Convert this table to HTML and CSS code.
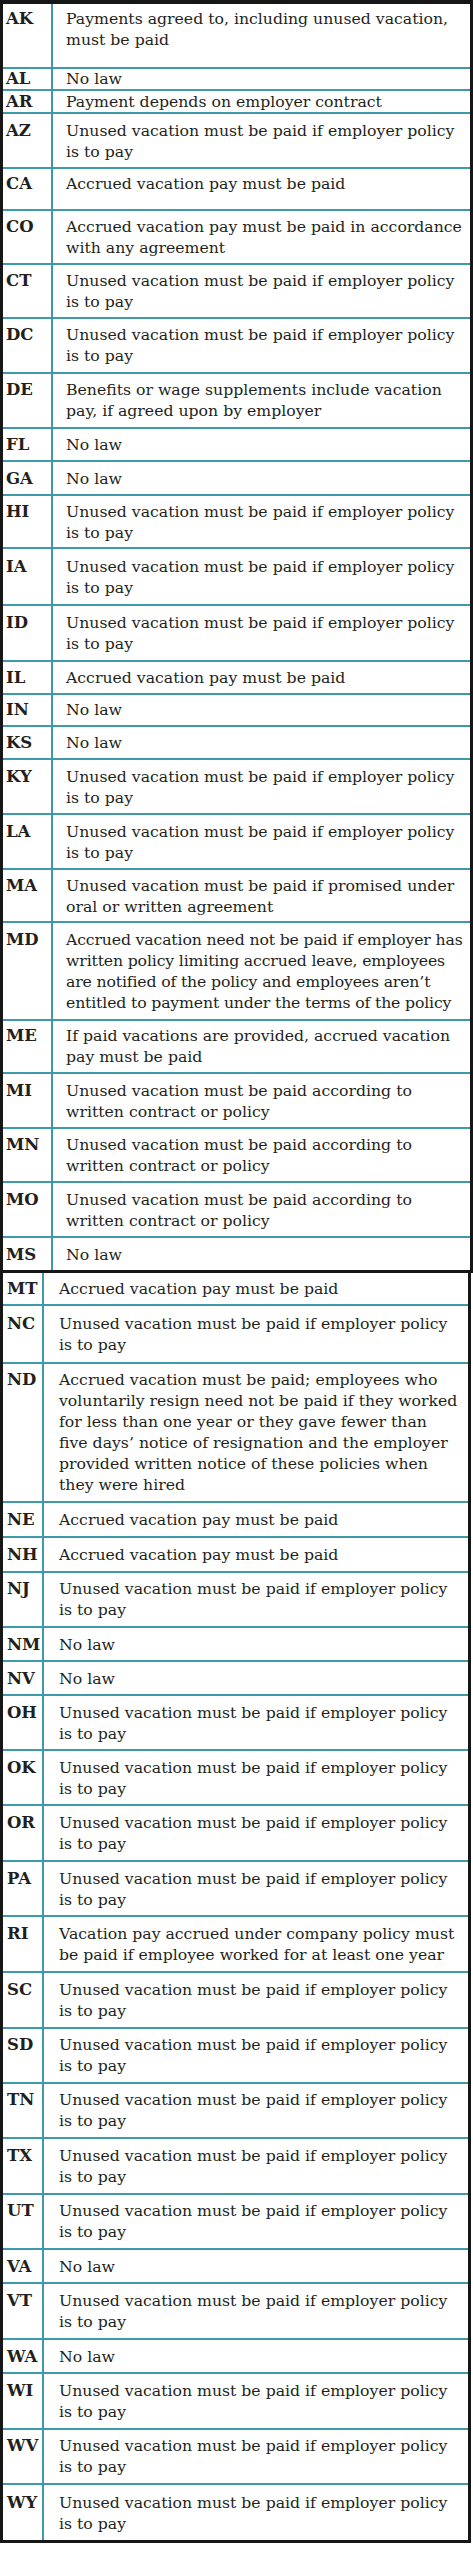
FILE: index.html
```html
<!DOCTYPE html>
<html lang="en">
<head>
<meta charset="utf-8">
<title>State vacation pay laws</title>
<link rel="stylesheet" href="styles.css">
</head>
<body>
<div class="sheet">
  <div class="part part-top">
    <div class="row row-top"><div class="code">AK</div><div class="desc">Payments agreed to, including unused vacation,<br>must be paid</div></div>
    <div class="row"><div class="code">AL</div><div class="desc">No law</div></div>
    <div class="row"><div class="code">AR</div><div class="desc">Payment depends on employer contract</div></div>
    <div class="row"><div class="code">AZ</div><div class="desc">Unused vacation must be paid if employer policy<br>is to pay</div></div>
    <div class="row row-top"><div class="code">CA</div><div class="desc">Accrued vacation pay must be paid</div></div>
    <div class="row"><div class="code">CO</div><div class="desc">Accrued vacation pay must be paid in accordance<br>with any agreement</div></div>
    <div class="row"><div class="code">CT</div><div class="desc">Unused vacation must be paid if employer policy<br>is to pay</div></div>
    <div class="row"><div class="code">DC</div><div class="desc">Unused vacation must be paid if employer policy<br>is to pay</div></div>
    <div class="row"><div class="code">DE</div><div class="desc">Benefits or wage supplements include vacation<br>pay, if agreed upon by employer</div></div>
    <div class="row"><div class="code">FL</div><div class="desc">No law</div></div>
    <div class="row"><div class="code">GA</div><div class="desc">No law</div></div>
    <div class="row"><div class="code">HI</div><div class="desc">Unused vacation must be paid if employer policy<br>is to pay</div></div>
    <div class="row"><div class="code">IA</div><div class="desc">Unused vacation must be paid if employer policy<br>is to pay</div></div>
    <div class="row"><div class="code">ID</div><div class="desc">Unused vacation must be paid if employer policy<br>is to pay</div></div>
    <div class="row"><div class="code">IL</div><div class="desc">Accrued vacation pay must be paid</div></div>
    <div class="row"><div class="code">IN</div><div class="desc">No law</div></div>
    <div class="row"><div class="code">KS</div><div class="desc">No law</div></div>
    <div class="row"><div class="code">KY</div><div class="desc">Unused vacation must be paid if employer policy<br>is to pay</div></div>
    <div class="row"><div class="code">LA</div><div class="desc">Unused vacation must be paid if employer policy<br>is to pay</div></div>
    <div class="row"><div class="code">MA</div><div class="desc">Unused vacation must be paid if promised under<br>oral or written agreement</div></div>
    <div class="row"><div class="code">MD</div><div class="desc desc-tight">Accrued vacation need not be paid if employer has<br>written policy limiting accrued leave, employees<br>are notified of the policy and employees aren’t<br>entitled to payment under the terms of the policy</div></div>
    <div class="row"><div class="code">ME</div><div class="desc">If paid vacations are provided, accrued vacation<br>pay must be paid</div></div>
    <div class="row"><div class="code">MI</div><div class="desc">Unused vacation must be paid according to<br>written contract or policy</div></div>
    <div class="row"><div class="code">MN</div><div class="desc">Unused vacation must be paid according to<br>written contract or policy</div></div>
    <div class="row"><div class="code">MO</div><div class="desc">Unused vacation must be paid according to<br>written contract or policy</div></div>
    <div class="row"><div class="code">MS</div><div class="desc">No law</div></div>
  </div>
  <div class="part part-bottom">
    <div class="row"><div class="code">MT</div><div class="desc">Accrued vacation pay must be paid</div></div>
    <div class="row"><div class="code">NC</div><div class="desc">Unused vacation must be paid if employer policy<br>is to pay</div></div>
    <div class="row"><div class="code">ND</div><div class="desc">Accrued vacation must be paid; employees who<br>voluntarily resign need not be paid if they worked<br>for less than one year or they gave fewer than<br>five days’ notice of resignation and the employer<br>provided written notice of these policies when<br>they were hired</div></div>
    <div class="row"><div class="code">NE</div><div class="desc">Accrued vacation pay must be paid</div></div>
    <div class="row"><div class="code">NH</div><div class="desc">Accrued vacation pay must be paid</div></div>
    <div class="row"><div class="code">NJ</div><div class="desc">Unused vacation must be paid if employer policy<br>is to pay</div></div>
    <div class="row"><div class="code">NM</div><div class="desc">No law</div></div>
    <div class="row"><div class="code">NV</div><div class="desc">No law</div></div>
    <div class="row"><div class="code">OH</div><div class="desc">Unused vacation must be paid if employer policy<br>is to pay</div></div>
    <div class="row"><div class="code">OK</div><div class="desc">Unused vacation must be paid if employer policy<br>is to pay</div></div>
    <div class="row"><div class="code">OR</div><div class="desc">Unused vacation must be paid if employer policy<br>is to pay</div></div>
    <div class="row"><div class="code">PA</div><div class="desc">Unused vacation must be paid if employer policy<br>is to pay</div></div>
    <div class="row"><div class="code">RI</div><div class="desc">Vacation pay accrued under company policy must<br>be paid if employee worked for at least one year</div></div>
    <div class="row"><div class="code">SC</div><div class="desc">Unused vacation must be paid if employer policy<br>is to pay</div></div>
    <div class="row"><div class="code">SD</div><div class="desc">Unused vacation must be paid if employer policy<br>is to pay</div></div>
    <div class="row"><div class="code">TN</div><div class="desc">Unused vacation must be paid if employer policy<br>is to pay</div></div>
    <div class="row"><div class="code">TX</div><div class="desc">Unused vacation must be paid if employer policy<br>is to pay</div></div>
    <div class="row"><div class="code">UT</div><div class="desc">Unused vacation must be paid if employer policy<br>is to pay</div></div>
    <div class="row"><div class="code">VA</div><div class="desc">No law</div></div>
    <div class="row"><div class="code">VT</div><div class="desc">Unused vacation must be paid if employer policy<br>is to pay</div></div>
    <div class="row"><div class="code">WA</div><div class="desc">No law</div></div>
    <div class="row"><div class="code">WI</div><div class="desc">Unused vacation must be paid if employer policy<br>is to pay</div></div>
    <div class="row"><div class="code">WV</div><div class="desc">Unused vacation must be paid if employer policy<br>is to pay</div></div>
    <div class="row"><div class="code">WY</div><div class="desc">Unused vacation must be paid if employer policy<br>is to pay</div></div>
  </div>
</div>
</body>
</html>
```

FILE: styles.css
```css
html, body {
  margin: 0;
  padding: 0;
  background: #ffffff;
}

.sheet {
  width: 473px;
  font-family: "DejaVu Serif", "Liberation Serif", serif;
  color: #231f20;
}

.part {
  display: grid;
  box-sizing: border-box;
  border-left: 3px solid #161616;
  border-right: 3px solid #161616;
}

.part-top {
  width: 473px;
  border-top: 4px solid #161616;
  border-bottom: 3px solid #161616;
  grid-template-rows: 64.5px 22.5px 23px 55px 41.5px 54px 54px 55.5px 54.5px 33.5px 34px 53px 57px 56px 32.5px 32.5px 33px 55px 55px 53px 97.5px 53.5px 55px 54px 55px 32px;
}

.part-bottom {
  width: 471px;
  border-bottom: 3px solid #161616;
  grid-template-rows: 33px 57.5px 139.5px 35px 34.5px 55.5px 34px 34px 55px 55px 56px 55px 56px 55.5px 55px 55.5px 55.5px 55.5px 34px 56px 34px 55.5px 55.5px 55px;
}

.row {
  display: grid;
  box-sizing: border-box;
  align-content: center;
  align-items: start;
  border-bottom: 2px solid #3e9aa9;
  overflow: hidden;
}

.row:last-child {
  border-bottom: 0;
}

.part-top .row {
  grid-template-columns: 48px 1fr;
  background: linear-gradient(90deg, transparent 48px, #3e9aa9 48px, #3e9aa9 50px, transparent 50px);
}

.part-bottom .row {
  grid-template-columns: 39px 1fr;
  background: linear-gradient(90deg, transparent 39px, #3e9aa9 39px, #3e9aa9 41px, transparent 41px);
}

.row-top {
  align-content: start;
  padding-top: 4px;
}

.code {
  font-weight: bold;
  font-size: 16.5px;
  line-height: 21px;
  padding-left: 3px;
  white-space: nowrap;
}

.part-bottom .code {
  padding-left: 4px;
}

.desc {
  font-size: 15.7px;
  line-height: 21px;
  white-space: nowrap;
  overflow: hidden;
  padding-left: 15px;
}

.desc-tight {
  letter-spacing: -0.15px;
}

.part-bottom .desc {
  padding-left: 17px;
}
```
